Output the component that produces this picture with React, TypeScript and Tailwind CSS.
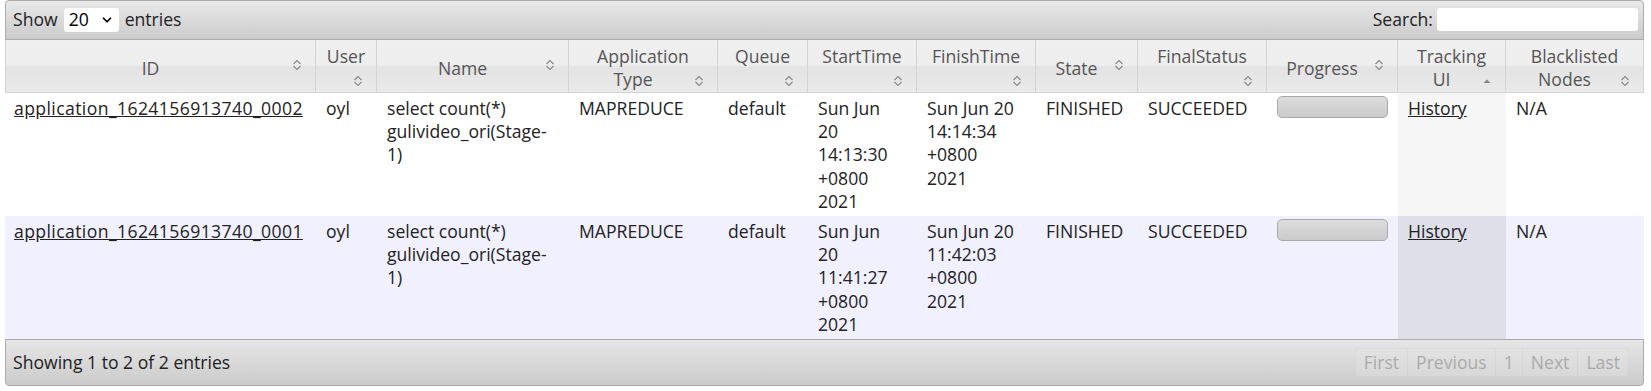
import React from 'react'
import { ChevronDown } from 'lucide-react'

type Column = {
  lines: string[]
  sorted?: boolean
}

const columns: Column[] = [
  { lines: ['ID'] },
  { lines: ['User', ''] },
  { lines: ['Name'] },
  { lines: ['Application', 'Type'] },
  { lines: ['Queue', ''] },
  { lines: ['StartTime', ''] },
  { lines: ['FinishTime', ''] },
  { lines: ['State'] },
  { lines: ['FinalStatus', ''] },
  { lines: ['Progress'] },
  { lines: ['Tracking', 'UI'], sorted: true },
  { lines: ['Blacklisted', 'Nodes'] },
]

const apps = [
  {
    id: 'application_1624156913740_0002',
    user: 'oyl',
    name: ['select count(*)', 'gulivideo_ori(Stage-', '1)'],
    type: 'MAPREDUCE',
    queue: 'default',
    start: ['Sun Jun', '20', '14:13:30', '+0800', '2021'],
    finish: ['Sun Jun 20', '14:14:34', '+0800', '2021'],
    state: 'FINISHED',
    finalStatus: 'SUCCEEDED',
  },
  {
    id: 'application_1624156913740_0001',
    user: 'oyl',
    name: ['select count(*)', 'gulivideo_ori(Stage-', '1)'],
    type: 'MAPREDUCE',
    queue: 'default',
    start: ['Sun Jun', '20', '11:41:27', '+0800', '2021'],
    finish: ['Sun Jun 20', '11:42:03', '+0800', '2021'],
    state: 'FINISHED',
    finalStatus: 'SUCCEEDED',
  },
]

const grid =
  'grid grid-cols-[311px_61px_192px_149px_90px_109px_119px_102px_129px_131px_108px_138px]'

const SortIcon = ({ sorted, className = '' }: { sorted?: boolean; className?: string }) => (
  <svg width="16" height="16" viewBox="0 0 16 16" className={className}>
    {sorted ? (
      <path d="M4.5 10 L8 6.5 L11.5 10 Z" fill="#888" />
    ) : (
      <path
        d="M4.5 7 L8 3.5 L11.5 7 M4.5 9 L8 12.5 L11.5 9"
        fill="none"
        stroke="#8a8a8a"
        strokeWidth="1.2"
      />
    )}
  </svg>
)

const HeaderCell = ({ col, first }: { col: Column; first: boolean }) => (
  <div
    className={`h-[53px] border-r border-b border-[#d3d3d3] bg-[linear-gradient(#efefef_0%,#eeeeee_48%,#e3e3e3_52%,#eaeaea_100%)] px-[10px] pt-[5px] text-[#555] ${
      first ? 'border-l' : ''
    }`}
  >
    {col.lines.length === 1 ? (
      <div className="flex h-[46.4px] items-center">
        <span className="flex-1 text-center">{col.lines[0]}</span>
        <span className="flex w-[20px] justify-end">
          <SortIcon sorted={col.sorted} className="-translate-y-[3px]" />
        </span>
      </div>
    ) : (
      <div className="flex flex-col">
        <div className="text-center">{col.lines[0]}</div>
        <div className="flex h-[23.2px] items-center">
          <span className="flex-1 text-center">{col.lines[1]}</span>
          <span className="flex w-[20px] justify-end">
            <SortIcon sorted={col.sorted} className="translate-y-[1px]" />
          </span>
        </div>
      </div>
    )}
  </div>
)

const Lines = ({ lines }: { lines: string[] }) => (
  <>
    {lines.map((line, i) => (
      <div key={i}>{line}</div>
    ))}
  </>
)

const App = () => {
  return (
    <div className="min-h-screen bg-white font-['Open_Sans',sans-serif] text-[17.6px] leading-[23.2px] text-[#222]">
      <div className="ml-[5px] w-[1639px]">
        {/* top toolbar */}
        <div className="flex h-[40px] items-center justify-between rounded-t-[4px] border border-[#aaa] bg-linear-to-b from-[#e9e9e9] to-[#cbcbcb] pr-[5px] pl-[7px]">
          <div className="flex items-center">
            <span>Show</span>
            <div className="mx-[6px] flex h-[24px] w-[55px] items-center justify-between rounded-[3px] bg-white pr-[5px] pl-[5px] text-[#000]">
              <span>20</span>
              <ChevronDown size={14} strokeWidth={3} />
            </div>
            <span>entries</span>
          </div>
          <div className="flex items-center">
            <span>Search:</span>
            <div className="ml-[4px] h-[23px] w-[201px] rounded-[3px] bg-white" />
          </div>
        </div>

        {/* header */}
        <div className={grid}>
          {columns.map((col, i) => (
            <HeaderCell key={i} col={col} first={i === 0} />
          ))}
        </div>

        {/* rows */}
        {apps.map((app, r) => {
          const even = r % 2 === 1
          const cell = 'px-[10px] pt-[4px] whitespace-nowrap'
          return (
            <div key={app.id} className={`${grid} h-[123px] ${even ? 'bg-[#f0f0fe]' : 'bg-white'}`}>
              <div className={`${cell} pl-[9px]`}>
                <a className="tracking-[0.4px] underline">{app.id}</a>
              </div>
              <div className={cell}>{app.user}</div>
              <div className={cell}>
                <Lines lines={app.name} />
              </div>
              <div className={cell}>{app.type}</div>
              <div className={cell}>{app.queue}</div>
              <div className={cell}>
                <Lines lines={app.start} />
              </div>
              <div className={cell}>
                <Lines lines={app.finish} />
              </div>
              <div className={cell}>{app.state}</div>
              <div className={cell}>{app.finalStatus}</div>
              <div className="px-[10px] pt-[3px]">
                <div
                  title="100%"
                  className="h-[22px] w-full rounded-[5px] border border-[#aaa] bg-linear-to-b from-[#dcdcdc] to-[#cbcbcb]"
                />
              </div>
              <div className={`${cell} ${even ? 'bg-[#dfdfe9]' : 'bg-[#f6f6f6]'}`}>
                <a className="underline">History</a>
              </div>
              <div className={cell}>N/A</div>
            </div>
          )
        })}

        {/* footer */}
        <div className="flex h-[47px] items-center justify-between rounded-b-[4px] border border-[#aaa] bg-linear-to-b from-[#e6e6e6] to-[#cbcbcb] pr-[14px] pl-[7px]">
          <span>Showing 1 to 2 of 2 entries</span>
          <div className="flex opacity-35">
            {['First', 'Previous', '1', 'Next', 'Last'].map((label, i, arr) => (
              <span
                key={label}
                className={`flex h-[29px] items-center border border-[#d3d3d3] bg-[#e6e6e6] px-[8px] text-[#555] ${
                  i > 0 ? '-ml-px' : 'rounded-l-[4px]'
                } ${i === arr.length - 1 ? 'rounded-r-[4px]' : ''}`}
              >
                {label}
              </span>
            ))}
          </div>
        </div>
      </div>
    </div>
  )
}

export default App
